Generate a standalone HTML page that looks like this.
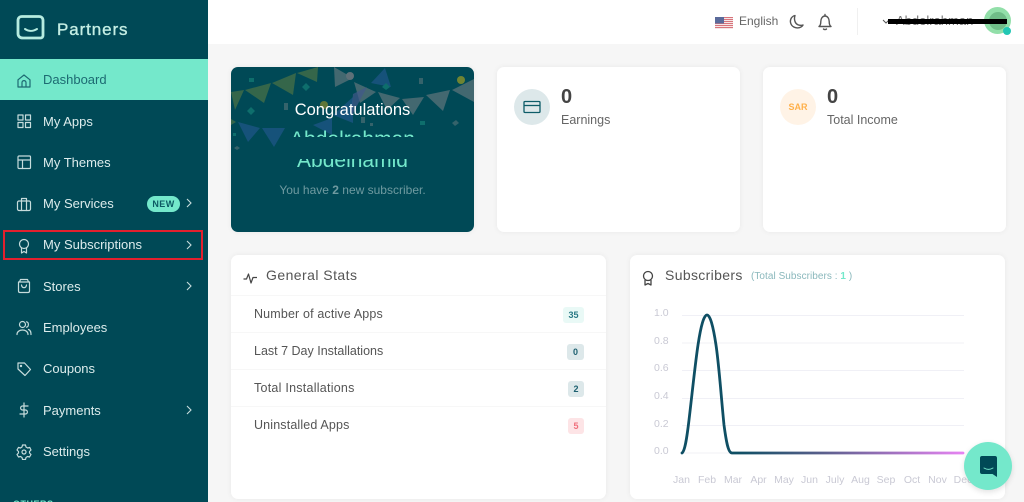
<!DOCTYPE html>
<html lang="en"><head><meta charset="utf-8"><title>Partners</title>
<style>
*{box-sizing:border-box;margin:0;padding:0}
html,body{width:1024px;height:502px;overflow:hidden;background:#f6f6f6;font-family:"Liberation Sans",sans-serif}
.a{position:absolute;white-space:nowrap}
#side{position:absolute;left:0;top:0;width:208px;height:502px;background:#004956;overflow:hidden}
#act{position:absolute;left:0;top:59px;width:208px;height:41px;background:#74e8cb}
.n{position:absolute;left:43px;font-size:13px;line-height:16px;color:#dcecec;margin-top:.5px}
.ic{position:absolute;left:16px;width:16px;height:16px;fill:none;stroke:#c6dcdc;stroke-width:1.200;stroke-linecap:round;stroke-linejoin:round}
.ch{position:absolute;left:185px;width:8px;height:10px;fill:none;stroke:#c6dcdc;stroke-width:1.100}
#top{position:absolute;left:208px;top:0;width:816px;height:44px;background:#fff}
.card{position:absolute;background:#fff;border-radius:7px;box-shadow:0 0 6px rgba(0,0,0,.06)}
.t{font-size:12.500px;color:#555;letter-spacing:.2px}
.badge{position:absolute;height:16px;border-radius:3px;font-size:9px;font-weight:bold;line-height:16px;text-align:center}
.sep{position:absolute;left:231px;width:375px;height:1px;background:#f7f7f7}
.m{position:absolute;top:474px;font-size:10.500px;color:#c9c9d4;transform:translateX(-50%)}
.y{position:absolute;left:654px;font-size:10.500px;color:#c9c9d4}
</style></head><body>
<div id="side">
<div id="act"></div>
<svg class="a" style="left:16px;top:14px" width="30" height="26" viewBox="0 0 30 26" fill="none" stroke="#b6ece0" stroke-width="2.800" stroke-linecap="round" stroke-linejoin="round"><path d="M6 2.500h17c2.500 0 4 1.500 4 4v15c0 1.500-1 2.500-2.500 2.500H7c-3 0-5-1.500-5-4.500V6.500c0-2.500 1.500-4 4-4z"/><path d="M9 15c3.500 2.500 8 2.500 12 0" stroke-width="2"/></svg>
<div class="a" style="left:57px;top:20px;font-size:17px;line-height:20px;color:#c4eee4;letter-spacing:.9px;-webkit-text-stroke:.35px #c4eee4">Partners</div>

<svg class="ic" style="top:73px;stroke:#1d6a72" viewBox="0 0 16 16"><path d="M2 6.800 8 2l6 4.800V14H2zM6 14V9.500c0-2.500 4-2.500 4 0V14"/></svg>
<div class="n" style="top:71.500px;color:#1d6a72">Dashboard</div>
<svg class="ic" style="top:113px" viewBox="0 0 16 16"><rect x="2" y="2" width="5" height="5"/><rect x="9.500" y="2" width="5" height="5"/><rect x="2" y="9.500" width="5" height="5"/><rect x="9.500" y="9.500" width="5" height="5"/></svg>
<div class="n" style="top:113px">My Apps</div>
<svg class="ic" style="top:154px" viewBox="0 0 16 16"><rect x="2" y="2" width="12.500" height="12.500" rx="1"/><path d="M2 6h12.500M6.500 6v8.500"/></svg>
<div class="n" style="top:154px">My Themes</div>
<svg class="ic" style="left:16px;top:196px;width:16px" viewBox="0 0 16 16"><rect x="1.500" y="5" width="13" height="9.500" rx="1.500"/><path d="M5.500 5V2.500h5V5M5.500 5v9.500M10.500 5v9.500"/></svg>
<div class="n" style="top:195px">My Services</div>
<div class="a" style="left:147px;top:195.500px;width:33px;height:16px;border-radius:8px;background:#74e8cb;color:#0c5a63;font-size:9px;font-weight:bold;line-height:16px;text-align:center;letter-spacing:.4px">NEW</div>
<svg class="ch" style="top:198px" viewBox="0 0 8 10"><path d="M2 1l4 4-4 4"/></svg>
<div class="a" style="left:3px;top:230px;width:200px;height:30px;border:2.500px solid #e2202e"></div>
<svg class="ic" style="top:238px" viewBox="0 0 16 16"><circle cx="8" cy="6" r="4.500"/><path d="M5.500 10v5l2.500-1.500 2.500 1.500v-5"/></svg>
<div class="n" style="top:236.500px">My Subscriptions</div>
<svg class="ch" style="top:240px" viewBox="0 0 8 10"><path d="M2 1l4 4-4 4"/></svg>
<svg class="ic" style="top:278px" viewBox="0 0 16 16"><path d="M2.500 4h11v9c0 1-.5 1.500-1.500 1.500H4c-1 0-1.500-.5-1.500-1.500zM3.500 4 4.500 1.500h7L12.500 4M5.500 7c.5 3.500 4.500 3.500 5 0"/></svg>
<div class="n" style="top:278px">Stores</div>
<svg class="ch" style="top:281px" viewBox="0 0 8 10"><path d="M2 1l4 4-4 4"/></svg>
<svg class="ic" style="top:320px" viewBox="0 0 16 16"><circle cx="6.500" cy="4.500" r="3"/><path d="M1 14.500c0-6 11-6 11 0M10.500 1.800c2.500.5 2.500 4.800 0 5.400M12.500 9.500c1.500.5 2.500 2.500 2.500 5"/></svg>
<div class="n" style="top:319px">Employees</div>
<svg class="ic" style="top:361px" viewBox="0 0 16 16"><path d="M2 2h6.500l6 6.500-5.500 6-7-6.500z"/><circle cx="5" cy="5" r=".6"/></svg>
<div class="n" style="top:360.500px">Coupons</div>
<svg class="ic" style="top:402px" viewBox="0 0 16 16"><path d="M8 1v14M12 4H6.500C4 4 4 8 6.500 8h3c2.500 0 2.500 4 0 4H4"/></svg>
<div class="n" style="top:402px">Payments</div>
<svg class="ch" style="top:405px" viewBox="0 0 8 10"><path d="M2 1l4 4-4 4"/></svg>
<svg class="ic" style="top:444px" viewBox="0 0 16 16"><circle cx="8" cy="8" r="2"/><path d="M6.500 1h3l.5 2 1.700 1 2-.6 1.300 2.600L13.500 7.500v1.500L15 10.500l-1.500 2.500-2-.5-1.500 1-.5 2h-3l-.5-2-1.500-1-2 .5L1 10.500 2.500 9V7.500L1 6l1.500-2.600 2 .6L6 3z"/></svg>
<div class="n" style="top:443px">Settings</div>
<div class="a" style="left:13px;top:499px;font-size:9px;line-height:10px;color:#74e8cb;letter-spacing:.5px;font-weight:bold">OTHERS</div>
</div>

<div id="top"></div>
<div class="a" style="left:857px;top:8px;width:1px;height:27px;background:#f0f0f0"></div>
<svg class="a" style="left:715px;top:17px" width="18" height="12" viewBox="0 0 18 12"><rect width="18" height="12" fill="#f5e6e6"/><path d="M0 .5h18M0 2.500h18M0 4.500h18M0 6.500h18M0 8.500h18M0 10.500h18" stroke="#d8747c" stroke-width="1"/><rect width="9" height="6.500" fill="#5a6a9a"/></svg>
<div class="a" style="left:739px;top:13px;font-size:12px;line-height:16px;color:#666">English</div>
<svg class="a" style="left:788px;top:13px" width="18" height="18" viewBox="0 0 18 18" fill="none" stroke="#555" stroke-width="1.400" stroke-linecap="round" stroke-linejoin="round"><path d="M7 2.500c-4 1-5.500 5-4 8.500s6.500 5 10 3c1-.5 1.500-1 2-2-4 1-7-.5-8-3.500-.7-2-.7-4 0-6z"/></svg>
<svg class="a" style="left:816px;top:13px" width="18" height="18" viewBox="0 0 18 18" fill="none" stroke="#555" stroke-width="1.400" stroke-linecap="round" stroke-linejoin="round"><path d="M3 13.500c1.500-1 1.800-2.500 1.800-5C4.800 5.500 6.500 3 9 3s4.200 2.500 4.200 5.500c0 2.500.3 4 1.800 5zM7.500 16c.7.800 2.300.8 3 0M9 3V1.500"/></svg>
<svg class="a" style="left:882px;top:19px" width="9" height="6" viewBox="0 0 9 6" fill="none" stroke="#555"><path d="M1 1l3 3 3-3"/></svg>
<div class="a" style="left:896px;top:13px;font-size:13px;line-height:16px;color:#777">Abdelrahman</div>
<div class="a" style="left:984px;top:7px;width:27px;height:27px;border-radius:50%;background:#92dfa9"></div>
<div class="a" style="left:988.500px;top:11.500px;width:18px;height:18px;border-radius:50%;background:#70bd88"></div>
<div class="a" style="left:888px;top:18.500px;width:119px;height:5px;background:#000"></div>
<div class="a" style="left:1003px;top:27px;width:8px;height:8px;border-radius:50%;background:#22c7b4"></div>

<div class="card" style="left:231px;top:67px;width:243px;height:165px;background:#004956;overflow:hidden">
<svg class="a" style="left:0;top:0" width="243" height="100" viewBox="0 0 243 100">
<g fill="#35664a"><path d="M0 25 13 23 4 43z"/><path d="M14 23 40 16 33 36z"/><path d="M41 16 65 6 62 28z"/><path d="M66 6 87 0 86 15z"/><path d="M0 52 5 55 0 58z"/></g>
<g fill="#16527a"><path d="M7 55 29 61 17 75z"/><path d="M31 61 54 61 43 80z"/><path d="M82 58 101 51 101 68z"/><path d="M102 48 122 30 122 56z"/><path d="M140 16 154 1 160 20z"/></g>
<g fill="#436870"><path d="M103 0 122 11 104 20z"/><path d="M123 15 145 25 129 36z"/><path d="M147 25 169 31 156 43z"/><path d="M171 32 193 30 182 48z"/><path d="M195 28 219 23 212 44z"/><path d="M221 23 243 12 243 35z"/></g>
<path d="M122 27 136 20 120 50z" fill="#41588a" opacity=".7"/>
<g fill="#0e6e6c"><rect x="18" y="11" width="5" height="4"/><path d="M75 16 79 20 75 24 71 20z"/><path d="M20 40 24 44 20 48 16 44z"/><path d="M155 16 159 20 155 23 151 20z"/><rect x="189" y="54" width="5" height="4"/><rect x="2" y="66" width="3" height="3"/></g>
<g fill="#35636b"><rect x="53" y="36" width="4" height="7"/><rect x="188" y="11" width="4" height="6"/><rect x="130" y="50" width="4" height="6"/><rect x="139" y="56" width="3" height="3"/><path d="M225 53 228 56 224 59 221 56z"/><path d="M6 79 9 81 6 83 3 81z"/></g>
<circle cx="93" cy="38" r="4" fill="#5e7638"/><circle cx="230" cy="13" r="4" fill="#6f8432"/><circle cx="119" cy="9" r="4" fill="#5e7078"/>
</svg>
<div class="a" style="left:0;width:243px;top:34px;text-align:center;font-size:16.500px;line-height:19px;color:#fff">Congratulations</div>
<div class="a" style="left:0;top:59px;width:243px;height:10.700px;overflow:hidden;text-align:center"><div style="margin-top:.5px;font-size:21px;line-height:26px;color:#74e8cb">Abdelrahman</div></div>
<div class="a" style="left:0;top:92px;width:243px;height:10px;overflow:hidden;text-align:center"><div style="margin-top:-11.250px;font-size:21px;line-height:26px;color:#74e8cb">Abdelhamid</div></div>
<div class="a" style="left:0;top:115px;width:243px;text-align:center;font-size:12px;line-height:15px;color:#6f9aa0;margin-top:.5px">You have <b>2</b> new subscriber.</div>
</div>

<div class="card" style="left:497px;top:67px;width:243px;height:165px"></div>
<div class="a" style="left:514px;top:89px;width:36px;height:36px;border-radius:50%;background:#dde8ea"></div>
<svg class="a" style="left:523px;top:100px" width="18" height="14" viewBox="0 0 18 14" fill="none" stroke="#0d5c68" stroke-width="1.300"><rect x="1" y="1.500" width="16" height="11" rx="1"/><path d="M1 5.500h16"/></svg>
<div class="a" style="left:561px;top:86px;font-size:20px;line-height:23px;font-weight:bold;color:#444">0</div>
<div class="a t" style="left:561px;top:113px;color:#666;letter-spacing:0">Earnings</div>

<div class="card" style="left:763px;top:67px;width:243px;height:165px"></div>
<div class="a" style="left:780px;top:89px;width:36px;height:36px;border-radius:50%;background:#fff3e6;color:#ffb04a;font-size:9px;font-weight:bold;line-height:36px;text-align:center">SAR</div>
<div class="a" style="left:827px;top:86px;font-size:20px;line-height:23px;font-weight:bold;color:#444">0</div>
<div class="a t" style="left:827px;top:113px;color:#666;letter-spacing:0">Total Income</div>

<div class="card" style="left:231px;top:255px;width:375px;height:244px"></div>
<svg class="a" style="left:243px;top:271px" width="15" height="14" viewBox="0 0 15 14" fill="none" stroke="#444" stroke-width="1.200" stroke-linejoin="round"><path d="M0.500 8h3L5.500 3l2.500 9L10 6.500h4"/></svg>
<div class="a" style="left:266px;top:266px;font-size:14px;line-height:18px;color:#555;letter-spacing:.45px">General Stats</div>
<div class="sep" style="top:295px"></div><div class="sep" style="top:332px"></div><div class="sep" style="top:369px"></div><div class="sep" style="top:406px"></div>
<div class="a t" style="left:254px;top:307px;letter-spacing:.15px">Number of active Apps</div>
<div class="a t" style="left:254px;top:344px;letter-spacing:0">Last 7 Day Installations</div>
<div class="a t" style="left:254px;top:381px;letter-spacing:.25px">Total Installations</div>
<div class="a t" style="left:254px;top:418px;letter-spacing:.15px">Uninstalled Apps</div>
<div class="badge" style="left:563px;top:307px;width:21px;background:#e9f9f6;color:#2a7a86">35</div>
<div class="badge" style="left:567px;top:344px;width:17px;background:#dde8ea;color:#1d6070">0</div>
<div class="badge" style="left:568px;top:381px;width:16px;background:#dde8ea;color:#1d6070">2</div>
<div class="badge" style="left:568px;top:418px;width:16px;background:#fde4e6;color:#f0707c">5</div>

<div class="card" style="left:630px;top:255px;width:375px;height:244px"></div>
<svg class="a" style="left:641px;top:270px" width="14" height="16" viewBox="0 0 14 16" fill="none" stroke="#444" stroke-width="1.300" stroke-linejoin="round"><circle cx="7" cy="6" r="4.500"/><path d="M4 10v5l3-1.500 3 1.500v-5"/></svg>
<div class="a" style="left:665px;top:266px;font-size:14px;line-height:18px;color:#555;letter-spacing:.35px">Subscribers</div>
<div class="a" style="left:751px;top:270px;font-size:10px;line-height:14px;color:#8ab8bc;letter-spacing:.05px">(Total Subscribers : <b style="color:#74e8cb">1</b> )</div>
<svg class="a" style="left:0;top:0" width="1024" height="502" viewBox="0 0 1024 502" fill="none">
<defs><linearGradient id="g" gradientUnits="userSpaceOnUse" x1="682" y1="0" x2="963" y2="0"><stop offset=".2" stop-color="#0f4f64"/><stop offset=".5" stop-color="#5a5f8c"/><stop offset="1" stop-color="#e684f2"/></linearGradient></defs>
<path d="M682 315.500h282M682 343h282M682 370.500h282M682 398.500h282M682 425.500h282M682 453h282" stroke="#f0f0f6" stroke-width="1"/>
<path d="M682 453C685 451 687 437 689 420C692 395 695 365 698 345C701 325 704 315 707 315C710 315 713 325 716 345C719 365 721 395 724 425C726 440 728 453 732 453H963" stroke="url(#g)" stroke-width="2.800" stroke-linecap="round"/>
</svg>
<div class="y" style="top:307px">1.0</div><div class="y" style="top:335px">0.8</div><div class="y" style="top:362px">0.6</div><div class="y" style="top:390px">0.4</div><div class="y" style="top:418px">0.2</div><div class="y" style="top:445px">0.0</div>
<div class="m" style="left:681.500px">Jan</div><div class="m" style="left:707px">Feb</div><div class="m" style="left:733px">Mar</div><div class="m" style="left:758.500px">Apr</div><div class="m" style="left:784px">May</div><div class="m" style="left:809.500px">Jun</div><div class="m" style="left:835px">July</div><div class="m" style="left:860.500px">Aug</div><div class="m" style="left:886px">Sep</div><div class="m" style="left:912px">Oct</div><div class="m" style="left:937.500px">Nov</div><div class="m" style="left:963px">Dec</div>
<div class="a" style="left:964px;top:442px;width:48px;height:48px;border-radius:50%;background:#74e8cb;box-shadow:0 2px 6px rgba(0,0,0,.12)"></div>
<svg class="a" style="left:979px;top:455px" width="19" height="23" viewBox="0 0 19 23"><path d="M3 1h13c1.200 0 2 .8 2 2v19l-4.500-3H3c-1.200 0-2-.8-2-2V3c0-1.200.8-2 2-2z" fill="#004956"/><path d="M5 13c3 1.800 6 1.800 9 0" stroke="#74e8cb" stroke-width="1" fill="none" stroke-linecap="round"/></svg>
</body></html>
